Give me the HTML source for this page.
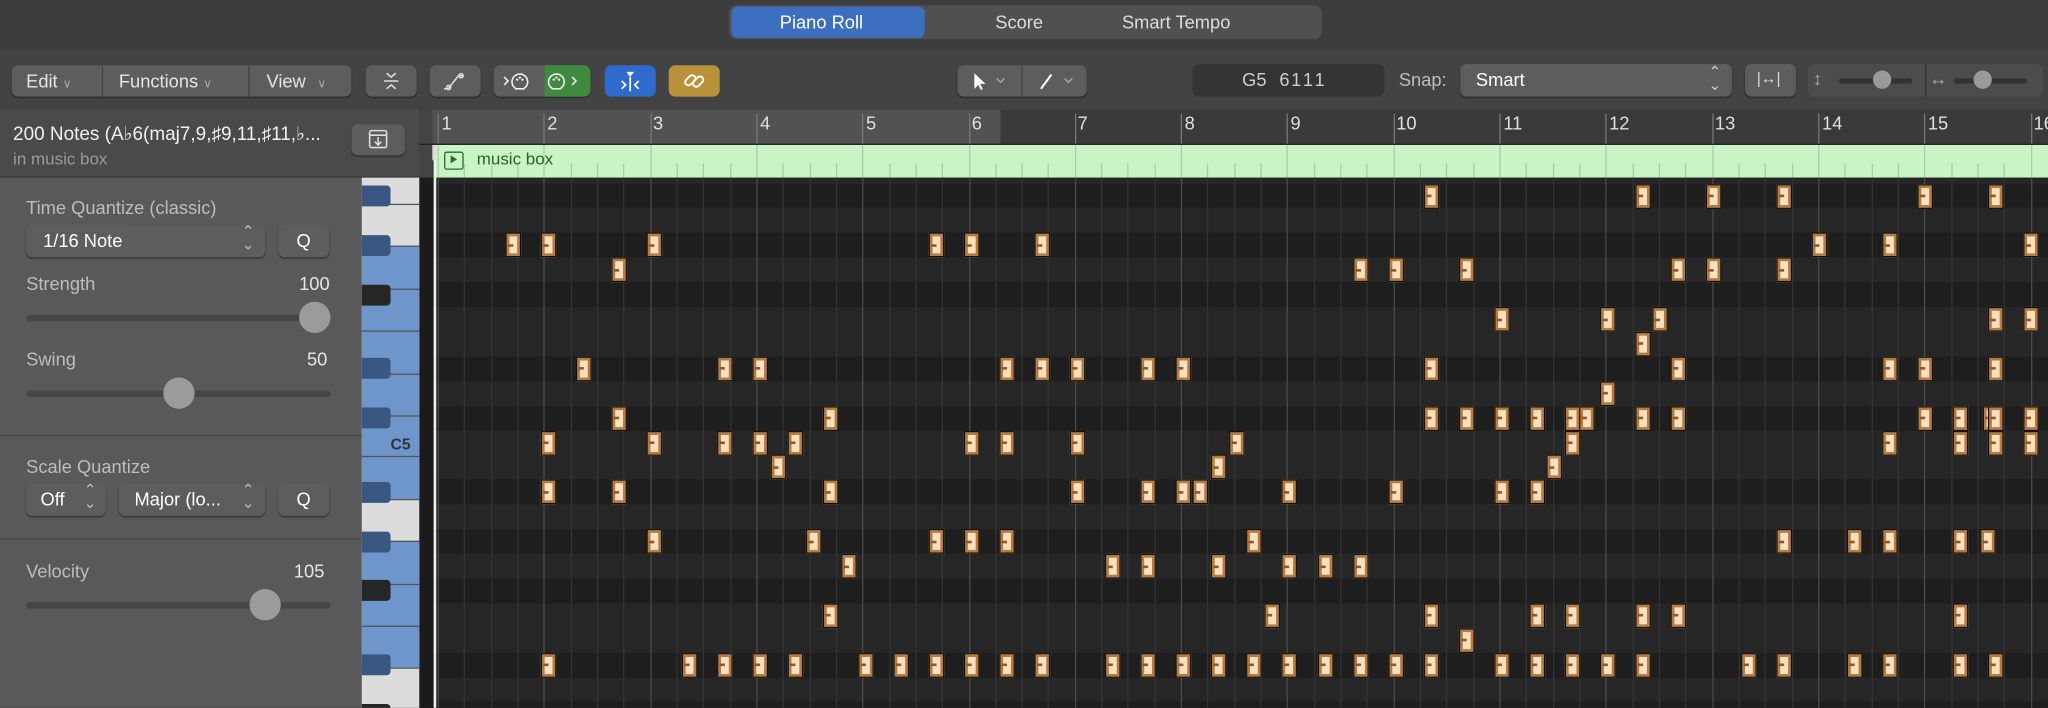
<!DOCTYPE html>
<html><head><meta charset="utf-8">
<style>
html,body{margin:0;padding:0;background:#3b3b3b;overflow:hidden}
body{width:2048px;height:708px}
#w{position:absolute;left:0;top:0;width:1568px;height:542px;transform:scale(1.30612);transform-origin:0 0;font-family:"Liberation Sans",sans-serif;overflow:hidden;background:#3c3c3c}
.a{position:absolute}
.btn{position:absolute;background:#5d5d5d;border-radius:5px;box-shadow:0 1px 1px rgba(0,0,0,.35)}
.t{position:absolute;color:#e6e6e6;font-size:14px;white-space:nowrap}
.lbl{position:absolute;color:#bdbdbd;font-size:14px;white-space:nowrap}
.n{position:absolute;width:10px;height:17px;background:#fde0c0;border:1px solid #141008;box-shadow:inset 0 0 0 2px #b57b43;box-sizing:border-box;width:12px;height:19px}
.n:after{content:"";position:absolute;left:1px;top:7.5px;width:4px;height:2px;background:#8a5a2a}
.rn{position:absolute;top:86px;color:#e0e0e0;font-size:14px}
.chev{color:#aaa;font-size:9px}
</style></head><body><div id="w">
<div class="a" style="left:0;top:0;width:1568px;height:38px;background:#3d3d3d"></div>
<div class="a" style="left:558px;top:4px;width:454px;height:26px;background:#505050;border-radius:6px"></div>
<div class="a" style="left:560px;top:5px;width:148px;height:24px;background:#3d6fc0;border-radius:5px"></div>
<div class="t" style="left:597px;top:9px;color:#fff">Piano Roll</div>
<div class="t" style="left:762px;top:9px;color:#ddd">Score</div>
<div class="t" style="left:859px;top:9px;color:#ddd">Smart Tempo</div>
<div class="a" style="left:0;top:38px;width:1568px;height:46px;background:#434343"></div>
<div class="btn" style="left:9px;top:50px;width:260px;height:24px"></div>
<div class="a" style="left:78px;top:50px;width:1px;height:24px;background:#444"></div>
<div class="a" style="left:190px;top:50px;width:1px;height:24px;background:#444"></div>
<div class="t" style="left:20px;top:54px">Edit <span class="chev">&#8744;</span></div>
<div class="t" style="left:91px;top:54px">Functions <span class="chev">&#8744;</span></div>
<div class="t" style="left:204px;top:54px">View <span class="chev">&nbsp;&nbsp;&#8744;</span></div>
<div class="btn" style="left:280px;top:50px;width:39px;height:24px"></div>
<svg class="a" style="left:280px;top:50px" width="39" height="24"><g stroke="#ddd" stroke-width="1.2" fill="none"><path d="M14 12h11M16 6l3.5 3 3.5-3M16 18l3.5-3 3.5 3"/></g></svg>
<div class="btn" style="left:329px;top:50px;width:39px;height:24px"></div>
<svg class="a" style="left:329px;top:50px" width="39" height="24"><g stroke="#ddd" stroke-width="1.2" fill="none"><path d="M11 18h3l8-10h4"/><circle cx="14.5" cy="17" r="1.6"/><circle cx="24" cy="8" r="1.6"/></g></svg>
<div class="btn" style="left:378px;top:50px;width:74px;height:24px"></div>
<div class="a" style="left:417px;top:50px;width:35px;height:24px;background:#3f8a3f;border-radius:0 5px 5px 0"></div>
<svg class="a" style="left:378px;top:50px" width="74" height="24"><g stroke="#eee" stroke-width="1.2" fill="none"><path d="M8 9l3 3-3 3"/><path d="M15 16a6 6 0 1 1 10 0l-2 2h-6z"/><path d="M43 16a6 6 0 1 1 10 0l-2 2h-6z"/><path d="M60 9l3 3-3 3"/></g><g fill="#eee"><circle cx="18" cy="11" r=".9"/><circle cx="20" cy="9.5" r=".9"/><circle cx="22" cy="11" r=".9"/><circle cx="46" cy="11" r=".9"/><circle cx="48" cy="9.5" r=".9"/><circle cx="50" cy="11" r=".9"/></g></svg>
<div class="a" style="left:463px;top:50px;width:39px;height:24px;background:#2f6bcf;border-radius:5px"></div>
<svg class="a" style="left:463px;top:50px" width="39" height="24"><g stroke="#fff" stroke-width="1.3" fill="none"><path d="M19.5 9v11M13 12l3 3-3 3M26 12l-3 3 3 3"/></g><path d="M16.5 5h6l-3 4z" fill="#fff"/></svg>
<div class="a" style="left:512px;top:50px;width:39px;height:24px;background:#b8923a;border-radius:5px"></div>
<svg class="a" style="left:512px;top:50px" width="39" height="24"><g stroke="#fff" stroke-width="1.5" fill="none"><rect x="12" y="9" width="9" height="5" rx="2.5" transform="rotate(-45 16.5 11.5)"/><rect x="18" y="10" width="9" height="5" rx="2.5" transform="rotate(-45 22.5 12.5)"/></g></svg>
<div class="btn" style="left:733px;top:50px;width:99px;height:24px"></div>
<div class="a" style="left:782px;top:50px;width:1px;height:24px;background:#444"></div>
<svg class="a" style="left:733px;top:50px" width="99" height="24"><path d="M13 6v12l3-3 2 4 1.5-.8-2-4h4z" fill="#fff"/><path d="M30 10l3 3 3-3M82 10l3 3 3-3" stroke="#aaa" fill="none"/><path d="M64 18l8-11" stroke="#fff" stroke-width="1.6"/></svg>
<div class="a" style="left:913px;top:49px;width:147px;height:25px;background:#343434;border-radius:5px"></div>
<div class="t" style="left:951px;top:53px;color:#cfcfcf;word-spacing:6px">G5 6&#8202;1&#8202;1&#8202;1</div>
<div class="lbl" style="left:1071px;top:53px">Snap:</div>
<div class="btn" style="left:1118px;top:49px;width:208px;height:25px"></div>
<div class="t" style="left:1130px;top:53px;color:#fff">Smart</div>
<div class="t" style="left:1308px;top:50px;font-size:12px;color:#ccc;line-height:10px">&#8963;<br>&#8964;</div>
<div class="btn" style="left:1336px;top:49px;width:39px;height:25px"></div>
<div class="t" style="left:1345px;top:53px;font-size:12px;color:#ddd">|&#8596;|</div>
<div class="a" style="left:1384px;top:49px;width:180px;height:25px;background:#4c4c4c;border-radius:5px"></div>
<div class="a" style="left:1474px;top:49px;width:1px;height:25px;background:#333"></div>
<div class="t" style="left:1388px;top:52px;color:#aaa">&#8597;</div>
<div class="a" style="left:1408px;top:60px;width:56px;height:4px;background:#333;border-radius:2px"></div>
<div class="a" style="left:1434px;top:54px;width:14px;height:14px;background:#9a9a9a;border-radius:7px"></div>
<div class="t" style="left:1477px;top:52px;color:#aaa">&#8596;</div>
<div class="a" style="left:1496px;top:60px;width:56px;height:4px;background:#333;border-radius:2px"></div>
<div class="a" style="left:1511px;top:54px;width:14px;height:14px;background:#9a9a9a;border-radius:7px"></div>
<div class="a" style="left:0;top:84px;width:321px;height:458px;background:#595959"></div>
<div class="a" style="left:0;top:84px;width:321px;height:51px;background:#4a4a4a"></div>
<div class="a" style="left:0;top:135px;width:321px;height:1px;background:#3a3a3a"></div>
<div class="t" style="left:10px;top:95px;font-size:14.5px;color:#f0f0f0">200 Notes (A&#9837;6(maj7,9,&#9839;9,11,&#9839;11,&#9837;...</div>
<div class="lbl" style="left:10px;top:114px;font-size:13px;color:#9a9a9a">in music box</div>
<div class="btn" style="left:269px;top:95px;width:41px;height:24px"></div>
<svg class="a" style="left:269px;top:95px" width="41" height="24"><g stroke="#ddd" stroke-width="1.2" fill="none"><rect x="14" y="5" width="13" height="13" rx="1.5"/><path d="M14 8.5h13M20.5 10v6M18 13.5l2.5 2.5 2.5-2.5"/></g></svg>
<div class="lbl" style="left:20px;top:151px">Time Quantize (classic)</div>
<div class="btn" style="left:20px;top:172px;width:183px;height:25px"></div>
<div class="t" style="left:33px;top:176px;color:#fff">1/16 Note</div>
<div class="t" style="left:185px;top:172px;font-size:12px;color:#bbb;line-height:10px">&#8963;<br>&#8964;</div>
<div class="btn" style="left:213px;top:172px;width:39px;height:25px"></div>
<div class="t" style="left:227px;top:176px;color:#fff">Q</div>
<div class="lbl" style="left:20px;top:209px">Strength</div>
<div class="t" style="left:229px;top:209px">100</div>
<div class="a" style="left:20px;top:241px;width:233px;height:5px;background:#464646;border-radius:3px"></div>
<div class="a" style="left:229px;top:231px;width:24px;height:24px;background:#9b9b9b;border-radius:12px"></div>
<div class="lbl" style="left:20px;top:267px">Swing</div>
<div class="t" style="left:235px;top:267px">50</div>
<div class="a" style="left:20px;top:299px;width:233px;height:5px;background:#464646;border-radius:3px"></div>
<div class="a" style="left:125px;top:289px;width:24px;height:24px;background:#9b9b9b;border-radius:12px"></div>
<div class="a" style="left:0;top:333px;width:277px;height:1px;background:#464646"></div>
<div class="lbl" style="left:20px;top:349px">Scale Quantize</div>
<div class="btn" style="left:20px;top:370px;width:61px;height:25px"></div>
<div class="t" style="left:31px;top:374px;color:#fff">Off</div>
<div class="t" style="left:64px;top:370px;font-size:12px;color:#bbb;line-height:10px">&#8963;<br>&#8964;</div>
<div class="btn" style="left:91px;top:370px;width:112px;height:25px"></div>
<div class="t" style="left:103px;top:374px;color:#fff">Major (lo...</div>
<div class="t" style="left:185px;top:370px;font-size:12px;color:#bbb;line-height:10px">&#8963;<br>&#8964;</div>
<div class="btn" style="left:213px;top:370px;width:39px;height:25px"></div>
<div class="t" style="left:227px;top:374px;color:#fff">Q</div>
<div class="a" style="left:0;top:412px;width:277px;height:1px;background:#464646"></div>
<div class="lbl" style="left:20px;top:429px">Velocity</div>
<div class="t" style="left:225px;top:429px">105</div>
<div class="a" style="left:20px;top:461px;width:233px;height:5px;background:#464646;border-radius:3px"></div>
<div class="a" style="left:191px;top:451px;width:24px;height:24px;background:#9b9b9b;border-radius:12px"></div>
<div class="a" style="left:321px;top:84px;width:1247px;height:26px;background:#3a3a3a"></div>
<div class="a" style="left:331px;top:84px;width:435px;height:26px;background:#525252"></div>
<div class="a" style="left:321px;top:84px;width:10px;height:52px;background:#444"></div>
<div class="a" style="left:321px;top:110px;width:1247px;height:1px;background:#222"></div>
<div id="rul"></div>
<div class="rn" style="left:338px">1</div><div class="rn" style="left:419px">2</div><div class="rn" style="left:500px">3</div><div class="rn" style="left:582px">4</div><div class="rn" style="left:663px">5</div><div class="rn" style="left:744px">6</div><div class="rn" style="left:825px">7</div><div class="rn" style="left:907px">8</div><div class="rn" style="left:988px">9</div><div class="rn" style="left:1069px">10</div><div class="rn" style="left:1151px">11</div><div class="rn" style="left:1232px">12</div><div class="rn" style="left:1313px">13</div><div class="rn" style="left:1395px">14</div><div class="rn" style="left:1476px">15</div><div class="rn" style="left:1557px">16</div>
<div class="a" style="left:333px;top:111px;width:1235px;height:25px;background:#c9f5c6"></div>
<div id="reg"></div>
<div class="a" style="left:340px;top:116px;width:13px;height:12px;border:1px solid #2d6b2d;border-radius:2px"></div>
<div class="a" style="left:345px;top:119px;width:0;height:0;border-left:5px solid #2d6b2d;border-top:3.5px solid transparent;border-bottom:3.5px solid transparent"></div>
<div class="t" style="left:365px;top:114px;font-size:13px;color:#2c5e2a">music box</div>
<div class="a" style="left:321px;top:136px;width:1247px;height:406px;background:#262626"></div>
<div id="g"></div>
<div class="a" style="left:321px;top:136px;width:11px;height:406px;background:#1b1b1b"></div>
<div class="a" style="left:332px;top:111px;width:2px;height:431px;background:#e8f5e8"></div>
<div class="a" style="left:331px;top:111px;width:3px;height:12px;background:#ddd;border-radius:0 0 3px 3px"></div>
<div id="p"></div>
<script>
var H='',c=150,r=18.9,black=[0,2,4,7,9,12,14,16,19,21];
for(var k=-1;k<22;k++){var y=c+r*k-r/2;if(black.indexOf(k)>=0)H+='<div class="a" style="left:332px;top:'+y+'px;width:1236px;height:'+r+'px;background:#1e1e1e"></div>';}
for(var b=0;b<16*4;b++){var x=335+b*81.3/4;H+='<div class="a" style="left:'+x+'px;top:136px;width:1px;height:406px;background:'+(b%4==0?'#4a4a4a':'#333')+'"></div>';}
document.getElementById('g').innerHTML=H;
var R='',G='';for(var b=0;b<16*4;b++){var x=335+b*81.3/4;if(b%4==0)R+='<div class="a" style="left:'+x+'px;top:87px;width:1px;height:23px;background:#777"></div>';G+='<div class="a" style="left:'+x+'px;top:'+(b%4==0?111:125)+'px;width:1px;height:'+(b%4==0?25:11)+'px;background:#a9cfa6"></div>';}
document.getElementById('rul').innerHTML=R;document.getElementById('reg').innerHTML=G;
var N={0:[1096,1258,1312,1366,1474,1528],2:[393,420,501,717,744,798,1393,1447,1555],3:[474,1042,1069,1123,1285,1312,1366],5:[1150,1231,1271,1528,1555],6:[1258],7:[447,555,582,771,798,825,879,906,1096,1285,1447,1474,1528],8:[1231],9:[474,636,1096,1123,1150,1177,1204,1215,1258,1285,1474,1501,1524,1528,1555],10:[420,501,555,582,609,744,771,825,947,1204,1447,1501,1528,1555],11:[596,933,1190],12:[420,474,636,825,879,906,919,987,1069,1150,1177],14:[501,623,717,744,771,960,1366,1420,1447,1501,1522],15:[650,852,879,933,987,1015,1042],17:[636,974,1096,1177,1204,1258,1285,1501],18:[1123],19:[420,528,555,582,609,663,690,717,744,771,798,852,879,906,933,960,987,1015,1042,1069,1096,1150,1177,1204,1231,1258,1339,1366,1420,1447,1501,1528]};
var P='';for(var k in N){N[k].forEach(function(x){P+='<div class="n" style="left:'+(x-6)+'px;top:'+(c+r*k-9.5)+'px"></div>';});}
var pk='',bl=[136,156,188,221,253,286,318,349,382,414,447,479,511,542],bb=[0,2,4,7,9,12,14,16,19,21];
pk+='<div class="a" style="left:277px;top:136px;width:44px;height:406px;background:#dcdcdc"></div>';
pk+='<div class="a" style="left:277px;top:188px;width:44px;height:194px;background:#6e96cb"></div>';
pk+='<div class="a" style="left:277px;top:414px;width:44px;height:97px;background:#6e96cb"></div>';
for(var i=1;i<bl.length-1;i++)pk+='<div class="a" style="left:277px;top:'+bl[i]+'px;width:44px;height:1px;background:#555"></div>';
bb.forEach(function(k){var y=c+r*k-8;var col=(k==4||k==16)?'#262626':'#3a5782';if(k==21)col='#262626';pk+='<div class="a" style="left:277px;top:'+y+'px;width:22px;height:16px;background:'+col+';border-radius:0 3px 3px 0"></div>';});
document.getElementById('p').innerHTML=P+pk;
</script>
<div class="t" style="left:299px;top:333px;font-size:12px;font-weight:bold;color:#2e3440">C5</div>
</div></body></html>
